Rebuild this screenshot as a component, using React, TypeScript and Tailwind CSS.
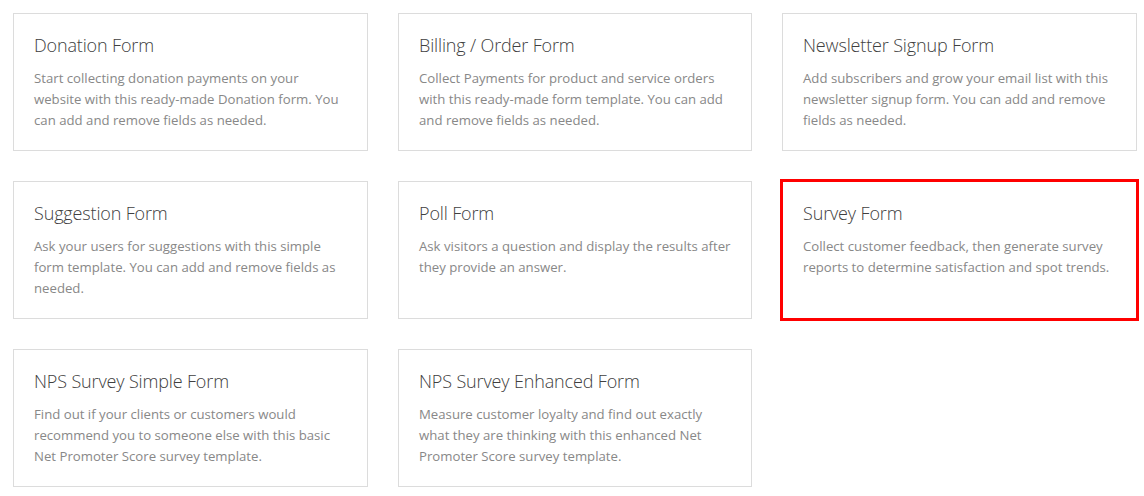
import React from "react";

type Card = { title: string; lines: string[]; highlight?: boolean };

const cards: Card[] = [
  {
    title: "Donation Form",
    lines: [
      "Start collecting donation payments on your",
      "website with this ready-made Donation form. You",
      "can add and remove fields as needed.",
    ],
  },
  {
    title: "Billing / Order Form",
    lines: [
      "Collect Payments for product and service orders",
      "with this ready-made form template. You can add",
      "and remove fields as needed.",
    ],
  },
  {
    title: "Newsletter Signup Form",
    lines: [
      "Add subscribers and grow your email list with this",
      "newsletter signup form. You can add and remove",
      "fields as needed.",
    ],
  },
  {
    title: "Suggestion Form",
    lines: [
      "Ask your users for suggestions with this simple",
      "form template. You can add and remove fields as",
      "needed.",
    ],
  },
  {
    title: "Poll Form",
    lines: [
      "Ask visitors a question and display the results after",
      "they provide an answer.",
    ],
  },
  {
    title: "Survey Form",
    lines: [
      "Collect customer feedback, then generate survey",
      "reports to determine satisfaction and spot trends.",
    ],
    highlight: true,
  },
  {
    title: "NPS Survey Simple Form",
    lines: [
      "Find out if your clients or customers would",
      "recommend you to someone else with this basic",
      "Net Promoter Score survey template.",
    ],
  },
  {
    title: "NPS Survey Enhanced Form",
    lines: [
      "Measure customer loyalty and find out exactly",
      "what they are thinking with this enhanced Net",
      "Promoter Score survey template.",
    ],
  },
];

export default function App() {
  return (
    <div
      className="w-[1144px] h-[496px] bg-white pl-[13px] pt-[13px] overflow-hidden"
      style={{ fontFamily: '"Open Sans", "Noto Sans", sans-serif' }}
    >
      <div className="grid grid-cols-[355px_354px_355px] auto-rows-[138px] gap-[30px]">
        {cards.map((c) => (
          <div
            key={c.title}
            className={
              c.highlight
                ? "border border-[#dcdcdc] bg-white px-5 pt-5 outline-[3px] outline-solid outline-[#ff0000] -outline-offset-1"
                : "border border-[#dcdcdc] bg-white px-5 pt-5"
            }
          >
            <h3 className="text-[18px] leading-[22px] text-[#404040] font-light tracking-[-0.15px]">
              {c.title}
            </h3>
            <p className="mt-[12px] text-[13.2px] leading-[21px] text-[#888] whitespace-nowrap">
              {c.lines.map((l, i) => (
                <React.Fragment key={i}>
                  {l}
                  {i < c.lines.length - 1 && <br />}
                </React.Fragment>
              ))}
            </p>
          </div>
        ))}
      </div>
    </div>
  );
}
